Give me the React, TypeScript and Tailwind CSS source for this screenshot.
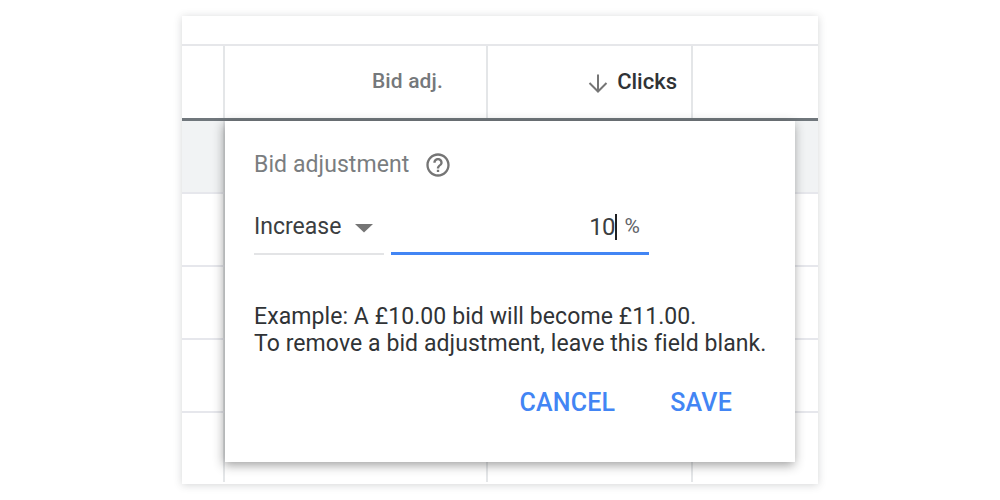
import React from "react";

function HeaderCell({ className, children }: { className?: string; children?: React.ReactNode }) {
  return (
    <div className={`flex h-full items-center justify-end border-r-2 border-[#e4e6e8] ${className ?? ""}`}>
      {children}
    </div>
  );
}

function Row({ bg }: { bg?: string }) {
  return (
    <div className={`grid h-[73px] grid-cols-[43px_263px_205px_1fr] border-b-2 border-[#e6e7ec] ${bg ?? ""}`}>
      <div className="border-r-2 border-[#e4e6e8]" />
      <div className="border-r-2 border-[#e4e6e8]" />
      <div className="border-r-2 border-[#e4e6e8]" />
      <div />
    </div>
  );
}

export default function App() {
  return (
    <div className="flex h-[500px] w-[1000px] justify-center bg-white pt-4 font-['Roboto',sans-serif]">
      <div className="relative h-[468px] w-[636px] bg-white shadow-[0_1px_8px_rgba(60,64,67,0.22)]">
        <div className="h-[30px] border-b-2 border-[#e6e7ea]" />
        <div className="grid h-[72px] grid-cols-[43px_263px_205px_1fr]">
          <HeaderCell />
          <HeaderCell className="pr-[43px]">
            <span className="text-[21px] font-medium tracking-[0.15px] text-[#75787b]">Bid adj.</span>
          </HeaderCell>
          <HeaderCell className="pb-[1px] pr-[14px]">
            <svg width="22" height="22" viewBox="0 0 22 22" fill="none" stroke="#757575" strokeWidth="2" className="mr-[8px] mt-[2px]">
              <path d="M11 2.5V19M2.5 11l8.5 8.5 8.5-8.5" />
            </svg>
            <span className="text-[22px] font-medium text-[#303336]">Clicks</span>
          </HeaderCell>
          <div />
        </div>
        <div className="h-[3px] bg-[#70777c]" />
        <Row bg="bg-[#f1f3f4]" />
        <Row />
        <Row />
        <Row />
        <div className="grid h-[69px] grid-cols-[43px_263px_205px_1fr]">
          <div className="border-r-2 border-[#e4e6e8]" />
          <div className="border-r-2 border-[#e4e6e8]" />
          <div className="border-r-2 border-[#e4e6e8]" />
          <div />
        </div>

        <div className="absolute left-[43px] top-[105px] h-[341px] w-[570px] bg-white px-[29px] shadow-[-1px_3px_10px_rgba(40,40,40,0.45)]">
          <div className="flex items-center pt-[29px]">
            <span className="text-[23px] leading-[30px] tracking-[0.08px] text-[#7a7d80]">Bid adjustment</span>
            <svg width="28" height="28" viewBox="0 0 24 24" fill="#757575" className="ml-[15px]">
              <path d="M11 18h2v-2h-2v2zm1-16C6.48 2 2 6.48 2 12s4.48 10 10 10 10-4.48 10-10S17.52 2 12 2zm0 18c-4.41 0-8-3.59-8-8s3.59-8 8-8 8 3.59 8 8-3.59 8-8 8zm0-14c-2.21 0-4 1.79-4 4h2c0-1.1.9-2 2-2s2 .9 2 2c0 2-3 1.75-3 5h2c0-2.25 3-2.5 3-5 0-2.21-1.79-4-4-4z" />
            </svg>
          </div>
          <div className="mt-[17px] flex gap-[7px]">
            <div className="flex h-[58px] w-[130px] items-center border-b-2 border-[#e3e4e6] pt-[4px]">
              <span className="text-[23px] text-[#3b3e41]">Increase</span>
              <svg width="18" height="10" viewBox="0 0 18 10" className="ml-[14px] mt-[1px]">
                <path d="M0 1h18L9 9.5z" fill="#757575" />
              </svg>
            </div>
            <div className="flex h-[58px] w-[258px] items-center justify-end border-b-[3px] border-[#4285f4] pr-[9px] pt-[5px]">
              <span className="text-[24px] tracking-[-0.5px] text-[#3b3e41]">10</span>
              <span className="h-[26px] w-[1.5px] bg-[#202124]" />
              <span className="ml-[8px] text-[21px] text-[#5f6368]">%</span>
            </div>
          </div>
          <p className="mt-[48px] whitespace-nowrap text-[23px] leading-[27px] tracking-[0.08px] text-[#303336]">
            Example: A £10.00 bid will become £11.00.
            <br />
            To remove a bid adjustment, leave this field blank.
          </p>
          <div className="mt-[30px] flex justify-end gap-[55px] pr-[34px]">
            <button className="text-[25px] font-medium leading-[32px] tracking-[0.2px] text-[#4285f4]">CANCEL</button>
            <button className="text-[25px] font-medium leading-[32px] tracking-[0.2px] text-[#4285f4]">SAVE</button>
          </div>
        </div>
      </div>
    </div>
  );
}
